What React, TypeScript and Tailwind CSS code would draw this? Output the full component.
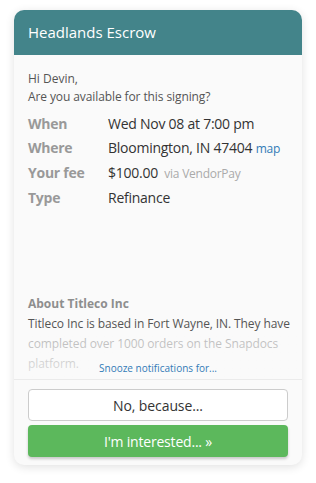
export default function App() {
  return (
    <div className="min-h-[483px] bg-white pl-[14px] pt-[10px] font-['Open_Sans',sans-serif]">
      <div className="flex h-[455px] w-[288px] flex-col overflow-hidden rounded-[10px] bg-[#fafafa] shadow-[0_2px_10px_rgba(0,0,0,0.12)]">
        <div className="flex h-[45px] shrink-0 items-center bg-[#43848a] px-[14px] text-[15px] text-white">
          Headlands Escrow
        </div>
        <div className="flex flex-1 flex-col px-[14px] pt-[15px] text-[#555]">
          <p className="text-[12px] leading-[18px]">Hi Devin,</p>
          <p className="text-[12px] leading-[18px] tracking-[-0.1px]">Are you available for this signing?</p>
          <div className="mt-[6px] text-[14px] leading-[24px] tracking-[-0.25px]">
            <Row label="When">Wed Nov 08 at 7:00 pm</Row>
            <Row label="Where">
              Bloomington, IN 47404 <span className="text-[12px] text-[#337ab7]">map</span>
            </Row>
            <Row label="Your fee">
              $100.00 <span className="ml-[3px] text-[12px] text-[#aaa]">via VendorPay</span>
            </Row>
            <Row label="Type">Refinance</Row>
          </div>
          <div className="relative mt-auto pb-[5px]">
            <p className="text-[12px] font-bold leading-[20px] text-[#8e8e8e]">About Titleco Inc</p>
            <p className="-mr-[9px] text-[12px] leading-[20px] tracking-[-0.1px] text-[#555]">
              Titleco Inc is based in Fort Wayne, IN. They have completed over 1000 orders on the Snapdocs platform.
            </p>
            <div className="absolute -right-[9px] left-0 bottom-0 h-[46px] bg-gradient-to-b from-[#fafafa]/60 to-[#fafafa]/85" />
            <div className="absolute inset-x-0 bottom-[3px] text-center text-[10px] leading-[16px] text-[#337ab7]">
              Snooze notifications for...
            </div>
          </div>
        </div>
        <div className="flex shrink-0 flex-col gap-[4px] border-t border-[#ebebeb] px-[14px] pb-[8px] pt-[9px]">
          <button className="h-[32px] rounded-[4px] border border-[#ccc] bg-white text-[14px] tracking-[-0.1px] text-[#333]">
            No, because...
          </button>
          <button className="h-[32px] rounded-[4px] bg-[#5cb85c] text-[14px] tracking-[-0.2px] text-white shadow-[0_2px_3px_rgba(0,0,0,0.2)]">
            I'm interested... »
          </button>
        </div>
      </div>
    </div>
  );
}

function Row({ label, children }: { label: string; children: React.ReactNode }) {
  return (
    <div className="flex">
      <span className="w-[80px] shrink-0 font-bold text-[#999]">{label}</span>
      <span className="text-[#333]">{children}</span>
    </div>
  );
}
